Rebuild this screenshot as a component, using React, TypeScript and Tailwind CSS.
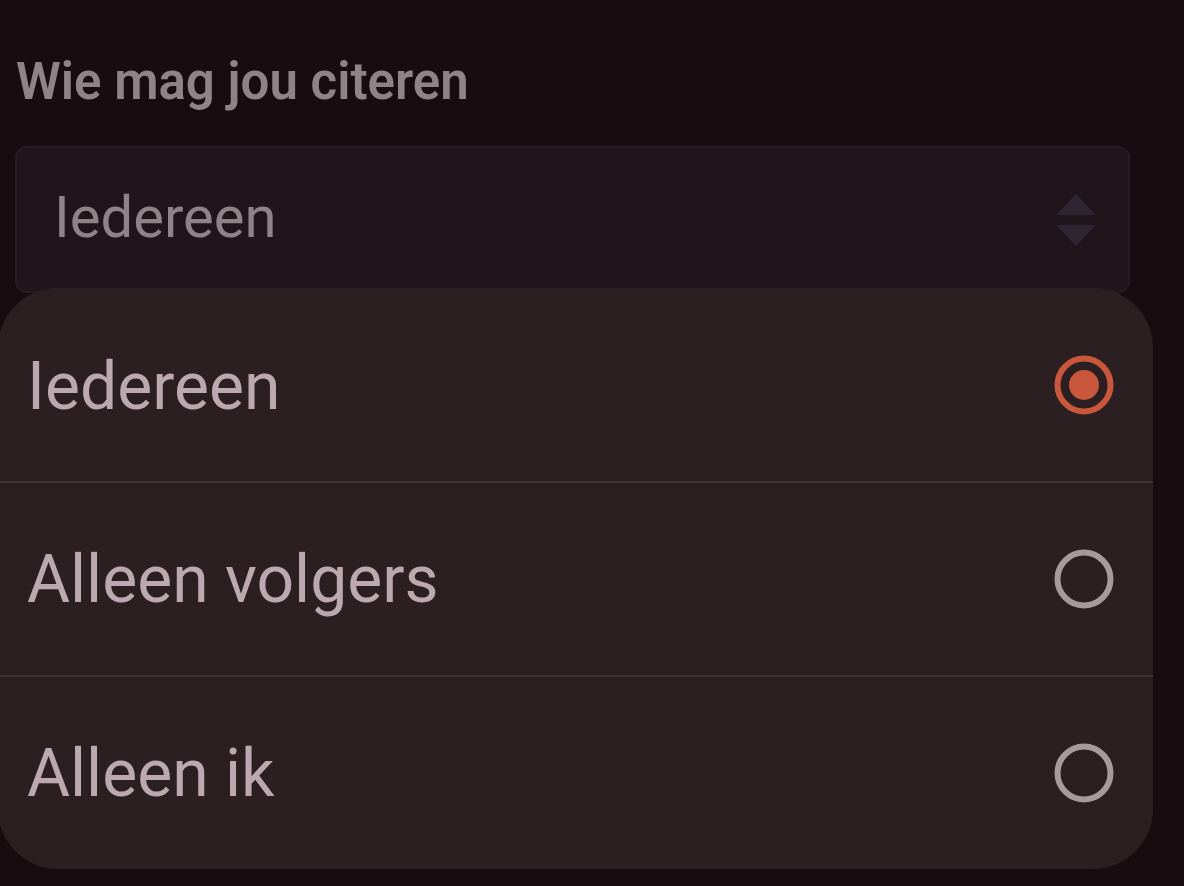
import { useState } from 'react';

const options = ['Iedereen', 'Alleen volgers', 'Alleen ik'];

function Radio({ checked }: { checked: boolean }) {
  if (checked) {
    return (
      <svg width="60" height="60" viewBox="0 0 60 60" className="shrink-0">
        <circle cx="30" cy="30" r="26.5" fill="none" stroke="#c9573c" strokeWidth="6" />
        <circle cx="30" cy="30" r="15" fill="#c9573c" />
      </svg>
    );
  }
  return (
    <svg width="60" height="60" viewBox="0 0 60 60" className="shrink-0">
      <circle cx="30" cy="30" r="26.5" fill="none" stroke="#a59a9d" strokeWidth="6" />
    </svg>
  );
}

export default function App() {
  const [selected, setSelected] = useState(0);

  return (
    <div
      className="w-[1184px] h-[886px] bg-[#170d10] overflow-hidden"
      style={{ fontFamily: 'Roboto, "Noto Sans", sans-serif' }}
    >
      <div className="pt-[52px]">
        <p className="pl-4 text-[51px] font-semibold leading-[60px] text-[#8e8386]">Wie mag jou citeren</p>

        <div className="relative mt-[34px]">
          <div className="ml-[15px] w-[1115px] h-[147px] rounded-xl border-2 border-[#281c24] bg-[#20151b] flex items-center justify-between pl-[37px] pr-[31px]">
            <span className="text-[58px] leading-none text-[#8e8386] -mt-[6px]">{options[selected]}</span>
            <svg width="42" height="52" viewBox="0 0 42 52">
              <path d="M21 0 L41 21 H1 Z" fill="#2e2432" />
              <path d="M1 31 H41 L21 52 Z" fill="#2e2432" />
            </svg>
          </div>

          <div className="absolute -left-[2px] top-[142px] w-[1155px] rounded-[60px] bg-[#2b1f22] overflow-hidden">
            {options.map((o, i) => (
              <button
                key={o}
                onClick={() => setSelected(i)}
                className={`w-full flex items-center justify-between pl-[29px] pr-[39px] text-left ${i > 0 ? 'h-[194px] border-t-2 border-[#3e3336]' : 'h-[193px]'}`}
              >
                <span className={`text-[66px] leading-none text-[#bba8b1] ${i > 0 ? 'mt-[2px]' : 'mt-[4px]'}`}>{o}</span>
                <Radio checked={i === selected} />
              </button>
            ))}
          </div>
        </div>
      </div>
    </div>
  );
}
